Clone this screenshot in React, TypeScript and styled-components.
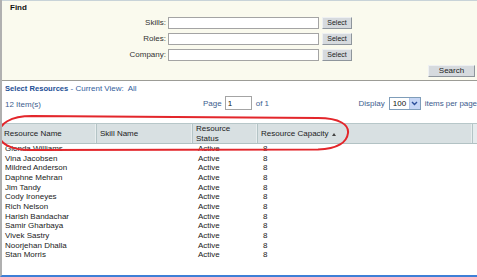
import React from "react";
import styled, { createGlobalStyle } from "styled-components";

const Global = createGlobalStyle`
  html, body { margin: 0; padding: 0; background: #fff; }
  body { font-family: "Liberation Sans", Arial, sans-serif; font-size: 8px; color: #222; }
  * { box-sizing: border-box; }
`;

const Page = styled.div`
  position: relative;
  width: 477px;
  height: 277px;
  overflow: hidden;
  border-left: 2px solid #b0b0b0;
  border-bottom: 2px solid #3f7fd6;
  display: flex;
  flex-direction: column;
`;

const FindPanel = styled.div`
  height: 81px;
  background: #fafaee;
  border-top: 1px solid #c8d3d8;
  border-bottom: 1px solid #9c9c96;
  padding: 2px 2px 0 0;
  display: flex;
  flex-direction: column;
`;

const Title = styled.div`
  font-weight: bold;
  line-height: 10px;
  padding-left: 8px;
  color: #111;
`;

const FormGrid = styled.div`
  margin-top: 4px;
  display: grid;
  grid-template-columns: 164px 151px 31px;
  grid-auto-rows: 12px;
  column-gap: 2px;
  row-gap: 4px;
  align-items: center;
`;

const Label = styled.label`
  text-align: right;
  color: #333;
  line-height: 12px;
`;

const TextInput = styled.input`
  height: 12px;
  width: 151px;
  border: 1px solid #a4a4a4;
  background: #fff;
  padding: 0 2px;
  margin: 0;
`;

const Btn = styled.button<{ $w: number; $fs: number }>`
  height: 12px;
  width: ${(p) => p.$w}px;
  margin: 0;
  padding: 0;
  font-family: "Liberation Sans", Arial, sans-serif;
  font-size: ${(p) => p.$fs}px;
  line-height: 10px;
  color: #222;
  background: #d6dade;
  border: 1px solid #8e959c;
  border-top-color: #eef0f2;
  border-left-color: #eef0f2;
`;

const SelectBtn = styled(Btn)`
  margin-left: 1px;
`;

const SearchRow = styled.div`
  margin-top: 4px;
  display: flex;
  justify-content: flex-end;
`;

const ResultsHead = styled.div`
  margin-top: 3px;
  padding-left: 3px;
  line-height: 10px;
  white-space: nowrap;
`;

const HeadStrong = styled.span`
  font-weight: bold;
  font-size: 7.6px;
  color: #1d4f95;
`;

const HeadSub = styled.span`
  color: #33609c;
`;

const PagerRow = styled.div`
  margin-top: 2px;
  height: 14px;
  display: flex;
  align-items: center;
  white-space: nowrap;
  color: #3d5d8e;
`;

const ItemCount = styled.div`
  width: 201px;
  padding-left: 3px;
  padding-top: 2px;
`;

const Pager = styled.div`
  display: flex;
  align-items: center;
  gap: 3px;
`;

const PageInput = styled.input`
  width: 27px;
  height: 14px;
  margin: 0 1px 0 0;
  border: 1px solid #a4a4a4;
  padding: 0 2px;
  font-family: "Liberation Sans", Arial, sans-serif;
  font-size: 8px;
  color: #111;
`;

const Display = styled.div`
  margin-left: auto;
  display: flex;
  align-items: center;
  gap: 3px;
`;

const PerPage = styled.span`
  letter-spacing: -0.05px;
`;

const FakeSelect = styled.div`
  width: 32px;
  height: 13px;
  border: 1px solid #7f9db9;
  background: #fff;
  display: flex;
  align-items: center;
  justify-content: space-between;
  color: #111;
  padding-left: 3px;
  margin: 0 1px;
`;

const Arrow = styled.div`
  width: 11px;
  height: 11px;
  background: #c6d6f5;
  border-left: 1px solid #b0c4ea;
  display: flex;
  align-items: center;
  justify-content: center;
`;

const TableArea = styled.div`
  margin-top: 13px;
  flex: 1;
`;

const cols = "95px 96px 65px 215px 4px";

const HeaderRow = styled.div`
  display: grid;
  grid-template-columns: ${cols};
  height: 21px;
  background: #d8e0e2;
  border-top: 1px solid #b7c7c9;
  border-bottom: 1px solid #b2c2c4;
`;

const HeadCell = styled.div<{ $pl: number }>`
  display: flex;
  align-items: center;
  padding-left: ${(p) => p.$pl}px;
  border-right: 1px solid #b4c4c6;
  box-shadow: inset -1px 0 0 #e8eeef;
  line-height: 9.5px;
  color: #222;
  white-space: nowrap;
`;

const EndCell = styled.div`
  background: #e6ecee;
`;

const SortUp = styled.span`
  display: inline-block;
  margin-left: 3px;
  width: 0;
  height: 0;
  border-left: 2.5px solid transparent;
  border-right: 2.5px solid transparent;
  border-bottom: 3px solid #444;
  transform: translateY(1px);
`;

const Row = styled.div`
  display: grid;
  grid-template-columns: ${cols};
  height: 9.67px;
  line-height: 9.67px;
  color: #222;
  white-space: nowrap;
`;

const Cell = styled.div<{ $pl: number }>`
  padding-left: ${(p) => p.$pl}px;
`;

const Overlay = styled.svg`
  position: absolute;
  left: -2px;
  top: 0;
  pointer-events: none;
`;

const people = [
  "Glenda Williams",
  "Vina Jacobsen",
  "Mildred Anderson",
  "Daphne Mehran",
  "Jim Tandy",
  "Cody Ironeyes",
  "Rich Nelson",
  "Harish Bandachar",
  "Samir Gharbaya",
  "Vivek Sastry",
  "Noorjehan Dhalla",
  "Stan Morris",
];

export default function App() {
  return (
    <>
      <Global />
      <Page>
        <FindPanel>
          <Title>Find</Title>
          <FormGrid>
            {["Skills:", "Roles:", "Company:"].map((l) => (
              <React.Fragment key={l}>
                <Label>{l}</Label>
                <TextInput />
                <SelectBtn $w={30} $fs={7}>Select</SelectBtn>
              </React.Fragment>
            ))}
          </FormGrid>
          <SearchRow>
            <Btn $w={47} $fs={8}>Search</Btn>
          </SearchRow>
        </FindPanel>

        <ResultsHead>
          <HeadStrong>Select Resources</HeadStrong>
          <HeadSub> - Current View:&nbsp; All</HeadSub>
        </ResultsHead>

        <PagerRow>
          <ItemCount>12 Item(s)</ItemCount>
          <Pager>
            <span>Page</span>
            <PageInput defaultValue="1" />
            <span>of 1</span>
          </Pager>
          <Display>
            <span>Display</span>
            <FakeSelect>
              <span>100</span>
              <Arrow>
                <svg width="7" height="5" viewBox="0 0 7 5">
                  <path d="M1 1 L3.5 3.5 L6 1" fill="none" stroke="#2c4f9a" strokeWidth="1.4" />
                </svg>
              </Arrow>
            </FakeSelect>
            <PerPage>items per page</PerPage>
          </Display>
        </PagerRow>

        <TableArea>
          <HeaderRow>
            <HeadCell $pl={2}>Resource Name</HeadCell>
            <HeadCell $pl={3}>Skill Name</HeadCell>
            <HeadCell $pl={3}>
              Resource
              <br />
              Status
            </HeadCell>
            <HeadCell $pl={3}>
              Resource Capacity
              <SortUp />
            </HeadCell>
            <EndCell />
          </HeaderRow>
          {people.map((p) => (
            <Row key={p}>
              <Cell $pl={3}>{p}</Cell>
              <Cell $pl={5}></Cell>
              <Cell $pl={5}>Active</Cell>
              <Cell $pl={5}>8</Cell>
              <Cell $pl={0}></Cell>
            </Row>
          ))}
        </TableArea>

        <Overlay width="477" height="277" viewBox="0 0 477 277">
          <path
            d="M32 116 L318 118 C340 118 349 125 348 133 C347 142 338 149 318 149.5 L30 150 C10 150 -1 143 -1 134 C-1 124 10 116 32 116 Z"
            fill="none"
            stroke="#e3262b"
            strokeWidth="2"
          />
        </Overlay>
      </Page>
    </>
  );
}
